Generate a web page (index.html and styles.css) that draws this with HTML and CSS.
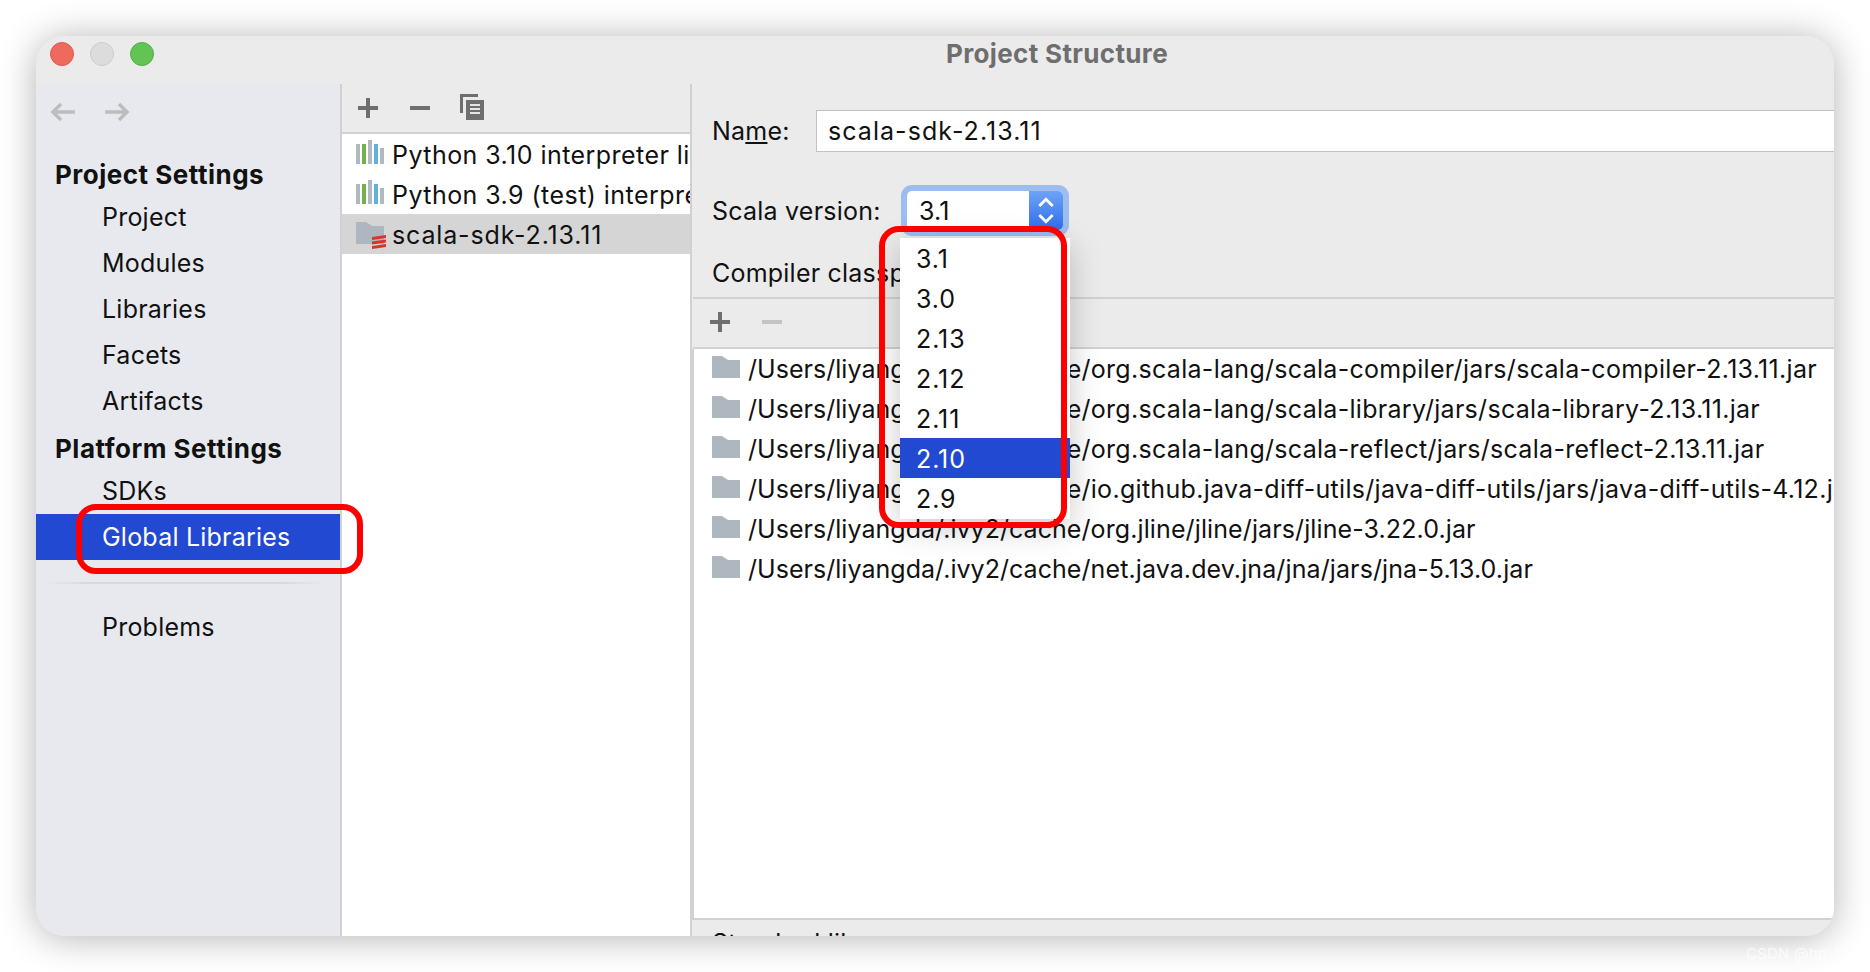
FILE: index.html
```html
<!DOCTYPE html>
<html lang="en">
<head>
<meta charset="utf-8">
<title>Project Structure</title>
<link rel="stylesheet" href="styles.css">
</head>
<body>
<svg class="defs" width="0" height="0" aria-hidden="true">
  <symbol id="folder" viewBox="0 0 28 22"><path d="M0 0h10l6 4h12v18H0z" fill="#aeb7c0"/></symbol>
  <symbol id="plus" viewBox="0 0 20 20"><path d="M8 0h4v8h8v4h-8v8H8v-8H0V8h8z"/></symbol>
  <symbol id="minus" viewBox="0 0 20 20"><path d="M0 8h20v4H0z"/></symbol>
  <symbol id="pylib" viewBox="0 0 28 24">
    <rect x="0" y="4" width="4" height="20" fill="#aeb9c0"/>
    <rect x="6" y="4" width="4" height="20" fill="#74b14e"/>
    <rect x="12" y="0" width="4" height="24" fill="#aeb9c0"/>
    <rect x="18" y="4" width="4" height="20" fill="#62b0dc"/>
    <rect x="24" y="8" width="4" height="16" fill="#aeb9c0"/>
  </symbol>
</svg>
<div class="window">
  <header class="titlebar">
    <div class="lights"><span class="light red"></span><span class="light gray"></span><span class="light green"></span></div>
    <div class="title">Project Structure</div>
  </header>
  <div class="content">
    <aside class="sidebar">
      <div class="arrows">
        <svg class="arrow" viewBox="0 0 26 20"><path d="M25 10H3M11 2l-8 8 8 8" /></svg>
        <svg class="arrow" viewBox="0 0 26 20"><path d="M1 10h22M15 2l8 8-8 8" /></svg>
      </div>
      <div class="heading">Project Settings</div>
      <div class="item">Project</div>
      <div class="item">Modules</div>
      <div class="item">Libraries</div>
      <div class="item">Facets</div>
      <div class="item">Artifacts</div>
      <div class="heading second">Platform Settings</div>
      <div class="item">SDKs</div>
      <div class="item active">Global Libraries</div>
      <div class="sep"></div>
      <div class="item problems">Problems</div>
    </aside>
    <section class="middle">
      <div class="mid-tools">
        <svg class="ic ic-plus"><use href="#plus"/></svg>
        <svg class="ic ic-minus"><use href="#minus"/></svg>
        <svg class="ic-copy" viewBox="0 0 24 26">
          <path d="M0 0h18v3H3v16H0z" fill="#6e6e6e"/>
          <rect x="6" y="6" width="18" height="20" fill="#6e6e6e"/>
          <path d="M10 11h10M10 15h10M10 19h10" stroke="#e4e4e4" stroke-width="2"/>
        </svg>
      </div>
      <div class="mid-list">
        <div class="mid-row"><svg class="ic-lib"><use href="#pylib"/></svg><span>Python 3.10 interpreter library</span></div>
        <div class="mid-row"><svg class="ic-lib"><use href="#pylib"/></svg><span>Python 3.9 (test) interpreter library</span></div>
        <div class="mid-row selected">
          <svg class="ic-scala" viewBox="0 0 30 28">
            <path d="M0 0h10l6 4h12v18H0z" fill="#aeb7c0"/>
            <path d="M16 15l14-2v3l-14 2zM16 19.500l14-2v3l-14 2zM16 24l14-2v3l-14 2z" fill="#d9342b"/>
          </svg>
          <span class="sdk">scala-sdk-2.13.11</span>
        </div>
      </div>
    </section>
    <section class="detail">
      <div class="name-row">
        <label class="name-label">Na<u>m</u>e:</label>
        <div class="name-input">scala-sdk-2.13.11</div>
      </div>
      <div class="version-row">
        <span class="version-label">Scala version:</span>
        <div class="combo">
          <span class="combo-text">3.1</span>
          <span class="combo-btn">
            <svg viewBox="0 0 16 26" class="chev"><path d="M2 9l6-6 6 6M2 17l6 6 6-6"/></svg>
          </span>
        </div>
      </div>
      <div class="cp-label">Compiler classpath:</div>
      <div class="cp-tools">
        <svg class="ic ic-plus"><use href="#plus"/></svg>
        <svg class="ic ic-minus off"><use href="#minus"/></svg>
      </div>
      <div class="cp-list">
        <div class="cp-row"><svg class="ic-folder"><use href="#folder"/></svg><span><span class="pre">/Users/liyangda/.ivy2/cache</span>/org.scala-lang/scala-compiler/jars/scala-compiler-2.13.11.jar</span></div>
        <div class="cp-row"><svg class="ic-folder"><use href="#folder"/></svg><span><span class="pre">/Users/liyangda/.ivy2/cache</span>/org.scala-lang/scala-library/jars/scala-library-2.13.11.jar</span></div>
        <div class="cp-row"><svg class="ic-folder"><use href="#folder"/></svg><span><span class="pre">/Users/liyangda/.ivy2/cache</span>/org.scala-lang/scala-reflect/jars/scala-reflect-2.13.11.jar</span></div>
        <div class="cp-row"><svg class="ic-folder"><use href="#folder"/></svg><span><span class="pre">/Users/liyangda/.ivy2/cache</span>/io.github.java-diff-utils/java-diff-utils/jars/java-diff-utils-4.12.jar</span></div>
        <div class="cp-row tight"><svg class="ic-folder"><use href="#folder"/></svg><span><span class="pre">/Users/liyangda/.ivy2/cache</span>/org.jline/jline/jars/jline-3.22.0.jar</span></div>
        <div class="cp-row tight"><svg class="ic-folder"><use href="#folder"/></svg><span><span class="pre">/Users/liyangda/.ivy2/cache</span>/net.java.dev.jna/jna/jars/jna-5.13.0.jar</span></div>
      </div>
      <div class="std-label">Standard library:</div>
    </section>
  </div>
  <div class="popup">
    <div class="opt">3.1</div>
    <div class="opt">3.0</div>
    <div class="opt">2.13</div>
    <div class="opt">2.12</div>
    <div class="opt">2.11</div>
    <div class="opt hl">2.10</div>
    <div class="opt">2.9</div>
  </div>
  <div class="mark mark-global"></div>
  <div class="mark mark-popup"></div>
</div>
<div class="watermark">CSDN @hp_l</div>
</body>
</html>
```
FILE: styles.css
```css
* { box-sizing: border-box; }
html, body { margin: 0; height: 100%; background: #fff; overflow: hidden; }
body {
  padding: 36px;
  position: relative;
  font-family: Inter, "Liberation Sans", sans-serif;
  font-size: 25px;
  letter-spacing: .22px;
  color: #111;
}
.defs { position: absolute; }
.sdk { letter-spacing: .85px; }

.window {
  position: relative;
  width: 1798px;
  height: 900px;
  border-radius: 28px;
  overflow: hidden;
  background: #ebebeb;
  display: flex;
  flex-direction: column;
  box-shadow: 0 2px 36px rgba(0, 0, 0, .3);
}

.titlebar {
  position: relative;
  height: 48px;
  flex: none;
  display: flex;
  align-items: center;
  justify-content: center;
  padding: 0 0 14px 244px;
  background: #ebebeb;
}
.lights {
  position: absolute;
  left: 14px;
  top: 6px;
  display: flex;
  gap: 16px;
}
.light { width: 24px; height: 24px; border-radius: 50%; }
.red { background: #ee6a5f; border: 1px solid #e0564b; }
.gray { background: #dcdcdc; border: 1px solid #cbcbcb; }
.green { background: #61c454; border: 1px solid #52ad45; }
.title {
  font-weight: 700;
  font-size: 26px;
  letter-spacing: .35px;
  color: #6e6e6e;
}

.content { flex: 1; min-height: 0; display: flex; }

.sidebar {
  width: 306px;
  flex: none;
  background: #e7e9ee;
  border-right: 2px solid #d1d1d1;
  display: flex;
  flex-direction: column;
}
.arrows {
  height: 71px;
  padding: 18px 0 0 14px;
  display: flex;
  gap: 28px;
  align-items: flex-start;
  flex: none;
}
.arrow { width: 26px; height: 20px; fill: none; stroke: #bdbdbd; stroke-width: 3.500; }
.heading {
  height: 39px;
  line-height: 39px;
  padding-left: 19px;
  font-weight: 700;
  font-size: 26px;
  letter-spacing: .5px;
  flex: none;
}
.heading.second { margin-top: 5px; }
.item {
  height: 46px;
  line-height: 46px;
  padding-left: 66px;
  flex: none;
}
.item.active { background: #2249d2; color: #fff; }
.sep {
  height: 2px;
  margin: 22px 14px 20px 7px;
  background: linear-gradient(90deg, #e7e9ee, #d8d9dd 15%, #d8d9dd 85%, #e7e9ee);
  flex: none;
}

.middle {
  width: 350px;
  flex: none;
  background: #fff;
  border-right: 2px solid #d1d1d1;
  display: flex;
  flex-direction: column;
  overflow: hidden;
}
.mid-tools {
  height: 50px;
  background: #ebebeb;
  border-bottom: 2px solid #d1d1d1;
  flex: none;
  display: flex;
  align-items: center;
  padding: 0 0 1px 16px;
}
.ic { width: 20px; height: 20px; fill: #6e6e6e; flex: none; }
.ic-plus { margin-right: 32px; }
.ic-minus { margin-right: 30px; }
.ic-minus.off { fill: #c4c4c4; margin-right: 0; }
.ic-copy { width: 24px; height: 26px; flex: none; margin-top: -2px; }
.mid-list { flex: 1; }
.mid-row {
  height: 40px;
  display: flex;
  align-items: center;
  gap: 8px;
  padding-left: 14px;
  white-space: nowrap;
  letter-spacing: .45px;
}
.mid-row span { position: relative; top: 1px; }
.mid-row span.sdk { letter-spacing: .85px; }
.mid-row.selected { background: #d5d5d5; }
.ic-lib { width: 28px; height: 24px; flex: none; margin-top: -4px; }
.ic-scala { width: 30px; height: 28px; flex: none; margin-right: -2px; margin-top: 4px; }

.detail {
  flex: 1;
  min-width: 0;
  display: flex;
  flex-direction: column;
  background: #ebebeb;
  overflow: hidden;
}
.name-row {
  display: flex;
  align-items: center;
  padding: 26px 0 0 20px;
  flex: none;
}
.name-label { width: 104px; flex: none; }
.name-input {
  flex: 1;
  height: 42px;
  line-height: 41px;
  padding-left: 11px;
  background: #fff;
  border: 1.500px solid #c2c2c2;
  border-right: 0;
  letter-spacing: 1.05px;
}
.version-row {
  display: flex;
  align-items: center;
  padding: 39px 0 0 20px;
  flex: none;
}
.version-label { width: 195px; flex: none; }
.combo {
  position: relative;
  width: 156px;
  height: 39px;
  border-radius: 5px;
  background: #fff;
  box-shadow: 0 0 0 6px #9dbdef;
  display: flex;
  align-items: center;
  overflow: visible;
}
.combo-text { padding-left: 12px; flex: 1; }
.combo-btn {
  width: 34px;
  height: 39px;
  border-radius: 0 5px 5px 0;
  background: linear-gradient(#6ea3f5, #2f6eea);
  display: flex;
  align-items: center;
  justify-content: center;
}
.chev { width: 18px; height: 29px; fill: none; stroke: #fff; stroke-width: 2.500; }
.cp-label {
  padding: 24px 0 0 20px;
  height: 67px;
  line-height: 38px;
  flex: none;
  white-space: nowrap;
}
.cp-tools {
  height: 52px;
  flex: none;
  margin-left: 1px;
  border-top: 2px solid #d1d1d1;
  border-bottom: 2px solid #d1d1d1;
  display: flex;
  align-items: center;
  padding: 0 0 2px 17px;
}
.cp-list {
  height: 571px;
  flex: none;
  background: #fff;
  border-left: 2px solid #d1d1d1;
  border-bottom: 2px solid #d1d1d1;
  overflow: hidden;
}
.cp-row {
  height: 40px;
  display: flex;
  align-items: center;
  gap: 8px;
  padding-left: 18px;
  white-space: nowrap;
  letter-spacing: .3px;
}
.cp-row.tight { letter-spacing: .11px; }
.pre { letter-spacing: .04px; }
.ic-folder { width: 28px; height: 22px; flex: none; margin-top: -5px; }
.std-label { padding: 8px 0 0 20px; flex: none; white-space: nowrap; }

.popup {
  position: absolute;
  left: 864px;
  top: 202px;
  width: 170px;
  height: 281px;
  background: #fff;
  box-shadow: 0 8px 30px rgba(0, 0, 0, .22);
  z-index: 2;
}
.opt { height: 40px; line-height: 42px; padding-left: 16px; letter-spacing: .9px; }
.opt.hl { background: #2249d2; color: #fff; }

.mark {
  position: absolute;
  border: 6px solid #f00;
  border-radius: 20px;
  z-index: 3;
}
.mark-global { left: 40px; top: 468px; width: 287px; height: 70px; }
.mark-popup { left: 843px; top: 190px; width: 188px; height: 302px; }

.watermark {
  position: absolute;
  left: 1746px;
  top: 944px;
  font-size: 15px;
  color: rgba(255, 255, 255, .75);
}
```
